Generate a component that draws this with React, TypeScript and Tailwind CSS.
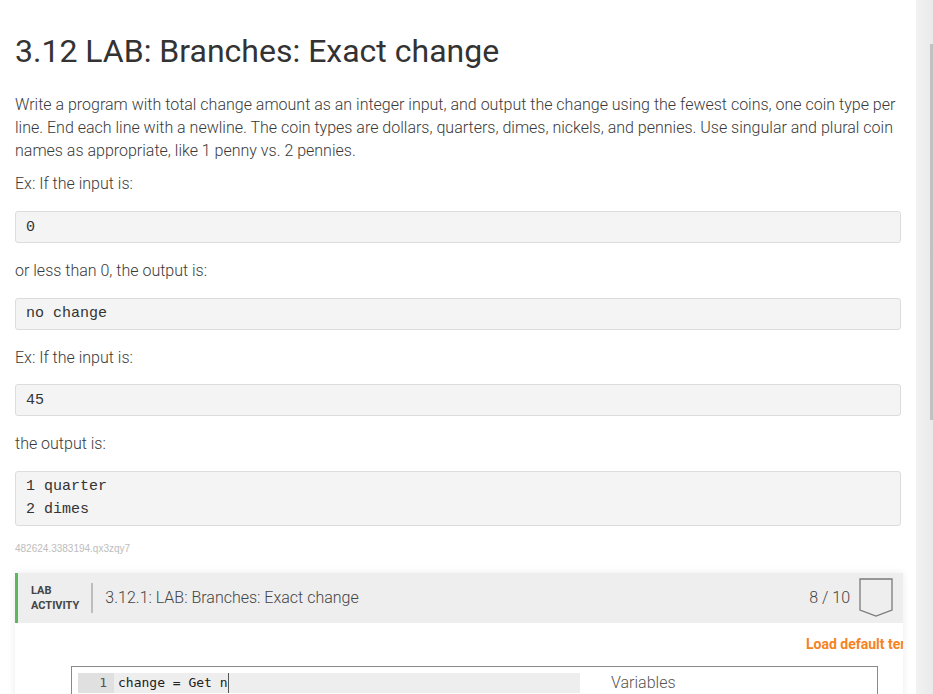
import React from 'react';

const sans = { fontFamily: 'Roboto, "Noto Sans", sans-serif' };

function CodeBox({ lines }: { lines: string[] }) {
  return (
    <pre className="rounded-[3px] border border-[#dcdcdc] bg-[#f4f4f4] px-[10px] py-[3.5px] font-['Liberation_Mono',monospace] text-[15px] leading-[23px] text-[#333]">
      {lines.join('\n')}
    </pre>
  );
}

function Badge() {
  return (
    <svg width="34" height="40" viewBox="0 0 34 40" className="shrink-0">
      <path d="M1 1 H33 V32 L17 38 L1 32 Z" fill="none" stroke="#7a7a7a" strokeWidth="1.3" />
    </svg>
  );
}

export default function App() {
  return (
    <div className="flex h-[694px] w-[933px] overflow-hidden bg-white" style={sans}>
      <main className="min-w-0 flex-1 px-[15px] pt-[29px] text-[#333]">
        <h1 className="text-[32px] leading-[44px] font-normal text-[#333]">3.12 LAB: Branches: Exact change</h1>

        <div className="mt-[20px] text-[16px] font-light leading-[23px] text-[#3a3a3a]">
          <p>
            Write a program with total change amount as an integer input, and output the change using the fewest coins, one coin type per line. End each line with a newline. The coin types are dollars, quarters, dimes, nickels, and pennies. Use singular and plural coin names as appropriate, like 1 penny vs. 2 pennies.
          </p>
          <p className="mt-[10px]">Ex: If the input is:</p>
          <div className="mt-[16px]"><CodeBox lines={['0']} /></div>
          <p className="mt-[16px]">or less than 0, the output is:</p>
          <div className="mt-[15.5px]"><CodeBox lines={['no change']} /></div>
          <p className="mt-[16px]">Ex: If the input is:</p>
          <div className="mt-[15.5px]"><CodeBox lines={['45']} /></div>
          <p className="mt-[16px]">the output is:</p>
          <div className="mt-[15.5px]"><CodeBox lines={['1 quarter', '2 dimes']} /></div>
          <p className="mt-[17px] font-['Liberation_Sans',sans-serif] text-[10px] leading-[12px] text-[#bdbdbd]">482624.3383194.qx3zqy7</p>
        </div>

        <section className="-mr-[2px] mt-[18px] overflow-hidden bg-white shadow-[0_0_8px_rgba(0,0,0,0.08)]">
          <header className="flex h-[50px] items-center border-l-[3px] border-[#5cb85c] bg-[#eeeeee] pr-[10px]">
            <div className="ml-[13px] text-[11px] font-bold leading-[15px] text-[#444]">
              <div>LAB</div>
              <div>ACTIVITY</div>
            </div>
            <div className="ml-[12px] h-[30px] w-[2px] bg-[#bdbdbd]" />
            <div className="ml-[12px] min-w-0 flex-1 text-[16px] font-light text-[#444]">3.12.1: LAB: Branches: Exact change</div>
            <div className="mr-[9px] text-[16px] font-light text-[#444]">8 / 10</div>
            <Badge />
          </header>
          <div className="h-[100px] overflow-hidden pt-[11px]">
            <div className="whitespace-nowrap pl-[791px] text-[14px] font-bold leading-[20px] text-[#f5831f]">Load default template...</div>
            <div className="ml-[56px] mr-[25px] mt-[12px] h-[60px] border border-[#8a8a8a] px-[6px] pt-[6px]">
              <div className="flex">
                <div className="flex w-[502px] bg-[#eeeeee] font-['DejaVu_Sans_Mono',monospace] text-[13px] leading-[20px]">
                  <div className="w-[36px] bg-[#e0e0e0] pr-[7px] text-right text-[#555]">1</div>
                  <div className="pl-[4px] text-[#222]">change = Get n</div>
                  <div className="h-[20px] w-px bg-[#555]" />
                </div>
                <div className="ml-[31px] text-[16px] font-light leading-[20px] text-[#555]">Variables</div>
              </div>
            </div>
          </div>
        </section>
      </main>
      <aside className="flex w-[17px] shrink-0 justify-end bg-gradient-to-r from-[#f2f2f2] to-[#eaeaea]">
        <div className="mt-[44px] h-[376px] w-[3px] bg-[#c1c1c1]" />
      </aside>
    </div>
  );
}
